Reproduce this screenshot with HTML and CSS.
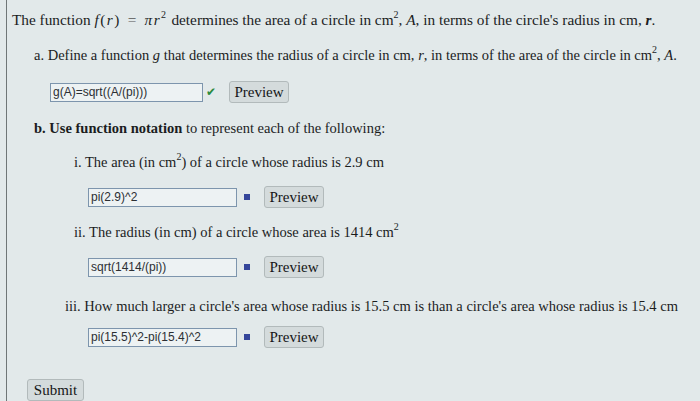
FILE: index.html
```html
<!DOCTYPE html>
<html lang="en">
<head>
    <meta charset="UTF-8">
    <title>Function notation</title>
    <link rel="stylesheet" href="styles.css">
</head>
<body>
    <div class="page">
        <p class="intro">The function <span class="math"><i>f</i>(<i>r</i>)</span><span class="eq">=</span><span class="math"><i>πr</i><sup>2</sup></span> determines the area of a circle in cm<sup>2</sup>, <i>A</i>, in terms of the circle's radius in cm, <b><i>r</i></b>.</p>

        <p class="part">a. Define a function <i>g</i> that determines the radius of a circle in cm, <i>r</i>, in terms of the area of the circle in cm<sup>2</sup>, <i>A</i>.</p>
        <div class="answer row-a">
            <input type="text" class="field wide" value="g(A)=sqrt((A/(pi)))">
            <span class="check">&#10004;</span>
            <button class="preview">Preview</button>
        </div>

        <p class="part"><b>b. Use function notation</b> to represent each of the following:</p>

        <p class="sub">i. The area (in cm<sup>2</sup>) of a circle whose radius is 2.9 cm</p>
        <div class="answer row-b">
            <input type="text" class="field" value="pi(2.9)^2">
            <span class="mark"></span>
            <button class="preview">Preview</button>
        </div>

        <p class="sub">ii. The radius (in cm) of a circle whose area is 1414 cm<sup>2</sup></p>
        <div class="answer row-b">
            <input type="text" class="field" value="sqrt(1414/(pi))">
            <span class="mark"></span>
            <button class="preview">Preview</button>
        </div>

        <p class="sub sub-iii">iii. How much larger a circle's area whose radius is 15.5 cm is than a circle's area whose radius is 15.4 cm</p>
        <div class="answer row-b last">
            <input type="text" class="field" value="pi(15.5)^2-pi(15.4)^2">
            <span class="mark"></span>
            <button class="preview">Preview</button>
        </div>

        <button class="submit">Submit</button>
    </div>
</body>
</html>
```

FILE: styles.css
```css
body {
    margin: 0;
    background-color: #e2e9ea;
    font-family: "Liberation Serif", "Times New Roman", serif;
    color: #1b1d1e;
    height: 401px;
    overflow: hidden;
}
.page {
    margin-left: 6px;
    border-left: 1px solid #6f7677;
    padding: 10px 0 0 5px;
    height: 401px;
    box-sizing: border-box;
}
p {
    margin: 0;
    font-size: 14.5px;
    line-height: 20px;
    white-space: nowrap;
}
.intro {
    font-size: 15.3px;
}
sup {
    font-size: 10px;
    line-height: 0;
    vertical-align: 7px;
}
.math {
    letter-spacing: 1.5px;
}
.eq {
    color: #555;
    padding: 0 8px 0 7px;
}
.part {
    margin: 15px 0 0 22px;
}
.sub {
    margin: 14px 0 0 62px;
}
.sub-iii {
    margin: 18px 0 0 53px;
}
.answer {
    display: flex;
    align-items: center;
    height: 22px;
}
.row-a {
    margin: 16px 0 0 38px;
}
.row-b {
    margin: 14px 0 0 76px;
}
.last {
    margin-top: 10px;
}
.field {
    box-sizing: border-box;
    height: 19px;
    padding: 0 2px;
    font-family: "Liberation Sans", Arial, sans-serif;
    font-size: 12px;
    color: #2c2f33;
    background-color: #edf2f3;
    border: 1px solid #7d95ad;
    outline: none;
}
.wide {
    width: 153px;
}
.row-b .field {
    width: 149px;
}
.check {
    color: #2b8a3e;
    font-size: 12px;
    margin: 0 13px 0 3px;
}
.mark {
    width: 6px;
    height: 6px;
    background-color: #34469a;
    margin: 0 14px 0 7px;
}
.preview, .submit {
    font-family: "Liberation Serif", "Times New Roman", serif;
    font-size: 15px;
    color: #141617;
    background-color: #d4dbdc;
    border: 1px solid #b2babb;
    border-radius: 3px;
    height: 22px;
    width: 60px;
    padding: 0;
}
.submit {
    display: block;
    margin: 31px 0 0 15px;
    width: 57px;
}
```
